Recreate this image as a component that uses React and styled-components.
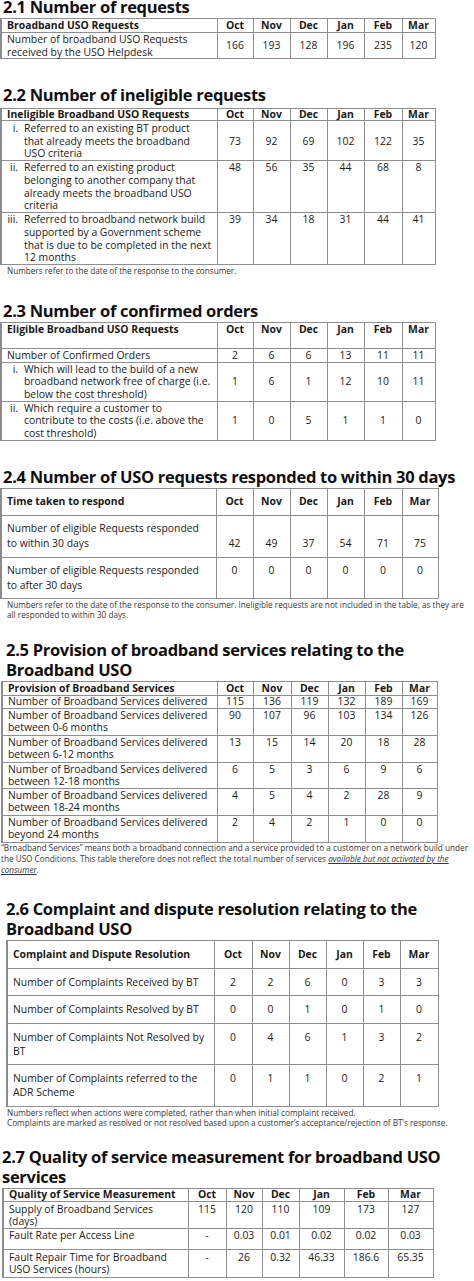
import React from 'react';
import styled, { createGlobalStyle } from 'styled-components';

const Global = createGlobalStyle`
  html, body { margin: 0; padding: 0; background: #ffffff; }
  body { font-family: "Open Sans", "Noto Sans", sans-serif; color: #1a1a1a; }
  #root { width: 474px; }
`;

const Page = styled.main`
  width: 474px;
  display: flex;
  flex-direction: column;
`;

const Section = styled.section`
  display: flex;
  flex-direction: column;
  align-items: flex-start;
`;

const Title = styled.h2`
  margin: ${(p) => p.$mt}px 0 ${(p) => p.$mb}px ${(p) => p.$x}px;
  font-family: "Open Sans", "Noto Sans", sans-serif;
  font-weight: 700;
  font-size: 16.5px;
  line-height: ${(p) => p.$lh || 20}px;
  letter-spacing: -0.3px;
  color: #111111;
  white-space: nowrap;
`;

const Grid = styled.table`
  border-collapse: collapse;
  table-layout: fixed;
  margin-left: ${(p) => p.$x}px;
  font-family: "Open Sans", "Noto Sans", sans-serif;
  font-size: 10.4px;
  line-height: ${(p) => p.$lh}px;
  color: #1a1a1a;
  border-left: 2px solid #8c8c8c;
`;

const Col = styled.col`
  width: ${(p) => p.$w}px;
`;

const Row = styled.tr`
  height: ${(p) => p.$h}px;
  line-height: ${(p) => (p.$lh ? `${p.$lh}px` : 'inherit')};
`;

const Cell = styled.td`
  border: 1px solid #8f8f8f;
  padding: ${(p) => p.$pt || 0}px 2px ${(p) => p.$pb || 0}px ${(p) => (p.$left ? 5 : 2)}px;
  vertical-align: ${(p) => p.$va || 'middle'};
  text-align: ${(p) => (p.$left ? 'left' : 'center')};
  font-weight: ${(p) => (p.$head ? 700 : 400)};
  white-space: nowrap;
  overflow: visible;
`;

const Item = styled.div`
  display: flex;
  margin-left: -5px;
`;

const Marker = styled.span`
  flex: 0 0 16px;
  text-align: right;
  padding-right: 6px;
`;

const ItemText = styled.span`
  display: block;
`;

const Note = styled.p`
  margin: ${(p) => p.$mt}px 0 0 ${(p) => p.$x}px;
  font-family: "Open Sans", "Noto Sans", sans-serif;
  font-size: 8.2px;
  line-height: ${(p) => p.$lh}px;
  color: #383838;
  white-space: nowrap;
`;

const Em = styled.em`
  font-style: italic;
  text-decoration: underline;
`;

const months = ['Oct', 'Nov', 'Dec', 'Jan', 'Feb', 'Mar'];

function Lines({ lines }) {
  return lines.map((l, i) => (
    <React.Fragment key={i}>
      {i > 0 && <br />}
      {l}
    </React.Fragment>
  ));
}

function DataTable({ xs, lh, head, rows }) {
  const widths = xs.slice(1).map((x, i) => x - xs[i]);
  return (
    <Grid $x={xs[0] - 1} $lh={lh} style={{ width: xs[xs.length - 1] - xs[0] + 1 }}>
      <colgroup>
        {widths.map((w, i) => (
          <Col key={i} $w={w} />
        ))}
      </colgroup>
      <thead>
        <Row $h={head.h} $lh={head.lh}>
          <Cell as="th" $head $left $va={head.va} $pt={head.pt}>
            {head.label}
          </Cell>
          {months.map((m) => (
            <Cell as="th" key={m} $head $va={head.va} $pt={head.pt}>
              {m}
            </Cell>
          ))}
        </Row>
      </thead>
      <tbody>
        {rows.map((r, ri) => (
          <Row key={ri} $h={r.h} $lh={r.lh}>
            <Cell $left $va={r.lva || r.va} $pt={r.pt}>
              {r.marker ? (
                <Item>
                  <Marker>{r.marker}</Marker>
                  <ItemText>
                    <Lines lines={r.lines} />
                  </ItemText>
                </Item>
              ) : (
                <Lines lines={r.lines} />
              )}
            </Cell>
            {r.values.map((v, vi) => (
              <Cell key={vi} $va={r.va} $pt={r.pt} $pb={r.pb}>
                {v}
              </Cell>
            ))}
          </Row>
        ))}
      </tbody>
    </Grid>
  );
}

const X4 = [1, 217, 253, 290, 327, 364, 402, 435];

export default function App() {
  return (
    <Page>
      <Global />

      <Section>
        <Title $mt={0} $mb={4} $x={3} $lh={14}>2.1 Number of requests</Title>
        <DataTable
          xs={X4}
          lh={12.7}
          head={{ label: 'Broadband USO Requests', h: 14 }}
          rows={[
            {
              lines: ['Number of broadband USO Requests', 'received by the USO Helpdesk'],
              values: [166, 193, 128, 196, 235, 120],
              h: 26,
            },
          ]}
        />
      </Section>

      <Section>
        <Title $mt={26} $mb={3} $x={3}>2.2 Number of ineligible requests</Title>
        <DataTable
          xs={X4}
          lh={12.6}
          head={{ label: 'Ineligible Broadband USO Requests', h: 12, lh: 11 }}
          rows={[
            {
              marker: 'i.',
              lines: ['Referred to an existing BT product', 'that already meets the broadband', 'USO criteria'],
              values: [73, 92, 69, 102, 122, 35],
              h: 40,
            },
            {
              marker: 'ii.',
              lines: [
                'Referred to an existing product',
                'belonging to another company that',
                'already meets the broadband USO',
                'criteria',
              ],
              values: [48, 56, 35, 44, 68, 8],
              h: 52,
              va: 'top',
              pt: 0,
            },
            {
              marker: 'iii.',
              lines: [
                'Referred to broadband network build',
                'supported by a Government scheme',
                'that is due to be completed in the next',
                '12 months',
              ],
              values: [39, 34, 18, 31, 44, 41],
              h: 51,
              va: 'top',
              pt: 0,
            },
          ]}
        />
        <Note $mt={1} $x={7} $lh={10}>
          Numbers refer to the date of the response to the consumer.
        </Note>
      </Section>

      <Section>
        <Title $mt={25} $mb={1} $x={3}>2.3 Number of confirmed orders</Title>
        <DataTable
          xs={X4}
          lh={12.6}
          head={{ label: 'Eligible Broadband USO Requests', h: 26, va: 'top', pt: 0 }}
          rows={[
            { lines: ['Number of Confirmed Orders'], values: [2, 6, 6, 13, 11, 11], h: 14 },
            {
              marker: 'i.',
              lines: [
                'Which will lead to the build of a new',
                'broadband network free of charge (i.e.',
                'below the cost threshold)',
              ],
              values: [1, 6, 1, 12, 10, 11],
              h: 38,
            },
            {
              marker: 'ii.',
              lines: ['Which require a customer to', 'contribute to the costs (i.e. above the', 'cost threshold)'],
              values: [1, 0, 5, 1, 1, 0],
              h: 39,
            },
          ]}
        />
      </Section>

      <Section>
        <Title $mt={26} $mb={1} $x={3}>2.4 Number of USO requests responded to within 30 days</Title>
        <DataTable
          xs={[1, 216, 253, 290, 327, 364, 402, 438]}
          lh={15}
          head={{ label: 'Time taken to respond', h: 27 }}
          rows={[
            {
              lines: ['Number of eligible Requests responded', 'to within 30 days'],
              values: [42, 49, 37, 54, 71, 75],
              h: 42,
              lva: 'top',
              va: 'bottom',
              pt: 5,
              pb: 6,
            },
            {
              lines: ['Number of eligible Requests responded', 'to after 30 days'],
              values: [0, 0, 0, 0, 0, 0],
              h: 41,
              va: 'top',
              pt: 5,
            },
          ]}
        />
        <Note $mt={1} $x={7} $lh={10}>
          Numbers refer to the date of the response to the consumer. Ineligible requests are not included in the table, as they are
          <br />
          all responded to within 30 days.
        </Note>
      </Section>

      <Section>
        <Title $mt={20} $mb={1} $x={6}>
          2.5 Provision of broadband services relating to the
          <br />
          Broadband USO
        </Title>
        <DataTable
          xs={[2, 217, 253, 291, 328, 365, 402, 437]}
          lh={12.5}
          head={{ label: 'Provision of Broadband Services', h: 14 }}
          rows={[
            { lines: ['Number of Broadband Services delivered'], values: [115, 136, 119, 132, 189, 169], h: 13, lh: 11.5 },
            {
              lines: ['Number of Broadband Services delivered', 'between 0-6 months'],
              values: [90, 107, 96, 103, 134, 126],
              h: 27,
              va: 'top',
              pt: 0,
            },
            {
              lines: ['Number of Broadband Services delivered', 'between 6-12 months'],
              values: [13, 15, 14, 20, 18, 28],
              h: 27,
              va: 'top',
              pt: 0,
            },
            {
              lines: ['Number of Broadband Services delivered', 'between 12-18 months'],
              values: [6, 5, 3, 6, 9, 6],
              h: 26,
              va: 'top',
              pt: 0,
            },
            {
              lines: ['Number of Broadband Services delivered', 'between 18-24 months'],
              values: [4, 5, 4, 2, 28, 9],
              h: 27,
              va: 'top',
              pt: 0,
            },
            {
              lines: ['Number of Broadband Services delivered', 'beyond 24 months'],
              values: [2, 4, 2, 1, 0, 0],
              h: 27,
              va: 'top',
              pt: 0,
            },
          ]}
        />
        <Note $mt={-1} $x={1} $lh={11}>
          “Broadband Services” means both a broadband connection and a service provided to a customer on a network build under
          <br />
          the USO Conditions. This table therefore does not reflect the total number of services{' '}
          <Em>available but not activated by the</Em>
          <br />
          <Em>consumer</Em>.
        </Note>
      </Section>

      <Section>
        <Title $mt={24} $mb={1} $x={6}>
          2.6 Complaint and dispute resolution relating to the
          <br />
          Broadband USO
        </Title>
        <DataTable
          xs={[7, 214, 252, 289, 326, 363, 400, 438]}
          lh={14}
          head={{ label: 'Complaint and Dispute Resolution', h: 28, va: 'top', pt: 6 }}
          rows={[
            {
              lines: ['Number of Complaints Received by BT'],
              values: [2, 2, 6, 0, 3, 3],
              h: 27,
              va: 'top',
              pt: 6,
            },
            {
              lines: ['Number of Complaints Resolved by BT'],
              values: [0, 0, 1, 0, 1, 0],
              h: 28,
              va: 'top',
              pt: 6,
            },
            {
              lines: ['Number of Complaints Not Resolved by', 'BT'],
              values: [0, 4, 6, 1, 3, 2],
              h: 41,
              va: 'top',
              pt: 6,
            },
            {
              lines: ['Number of Complaints referred to the', 'ADR Scheme'],
              values: [0, 1, 1, 0, 2, 1],
              h: 42,
              va: 'top',
              pt: 6,
            },
          ]}
        />
        <Note $mt={1} $x={7} $lh={10}>
          Numbers reflect when actions were completed, rather than when initial complaint received.
          <br />
          Complaints are marked as resolved or not resolved based upon a customer’s acceptance/rejection of BT’s response.
        </Note>
      </Section>

      <Section>
        <Title $mt={19} $mb={1} $x={2}>
          2.7 Quality of service measurement for broadband USO
          <br />
          services
        </Title>
        <DataTable
          xs={[3, 188, 226, 262, 299, 344, 388, 433]}
          lh={12.5}
          head={{ label: 'Quality of Service Measurement', h: 13, lh: 11.5 }}
          rows={[
            {
              lines: ['Supply of Broadband Services', '(days)'],
              values: [115, 120, 110, 109, 173, 127],
              h: 27,
              va: 'top',
              pt: 1,
            },
            {
              lines: ['Fault Rate per Access Line'],
              values: ['-', '0.03', '0.01', '0.02', '0.02', '0.03'],
              h: 21,
              va: 'top',
              pt: 0,
            },
            {
              lines: ['Fault Repair Time for Broadband', 'USO Services (hours)'],
              values: ['-', 26, '0.32', '46.33', '186.6', '65.35'],
              h: 28,
              va: 'top',
              pt: 1,
            },
          ]}
        />
      </Section>
    </Page>
  );
}
